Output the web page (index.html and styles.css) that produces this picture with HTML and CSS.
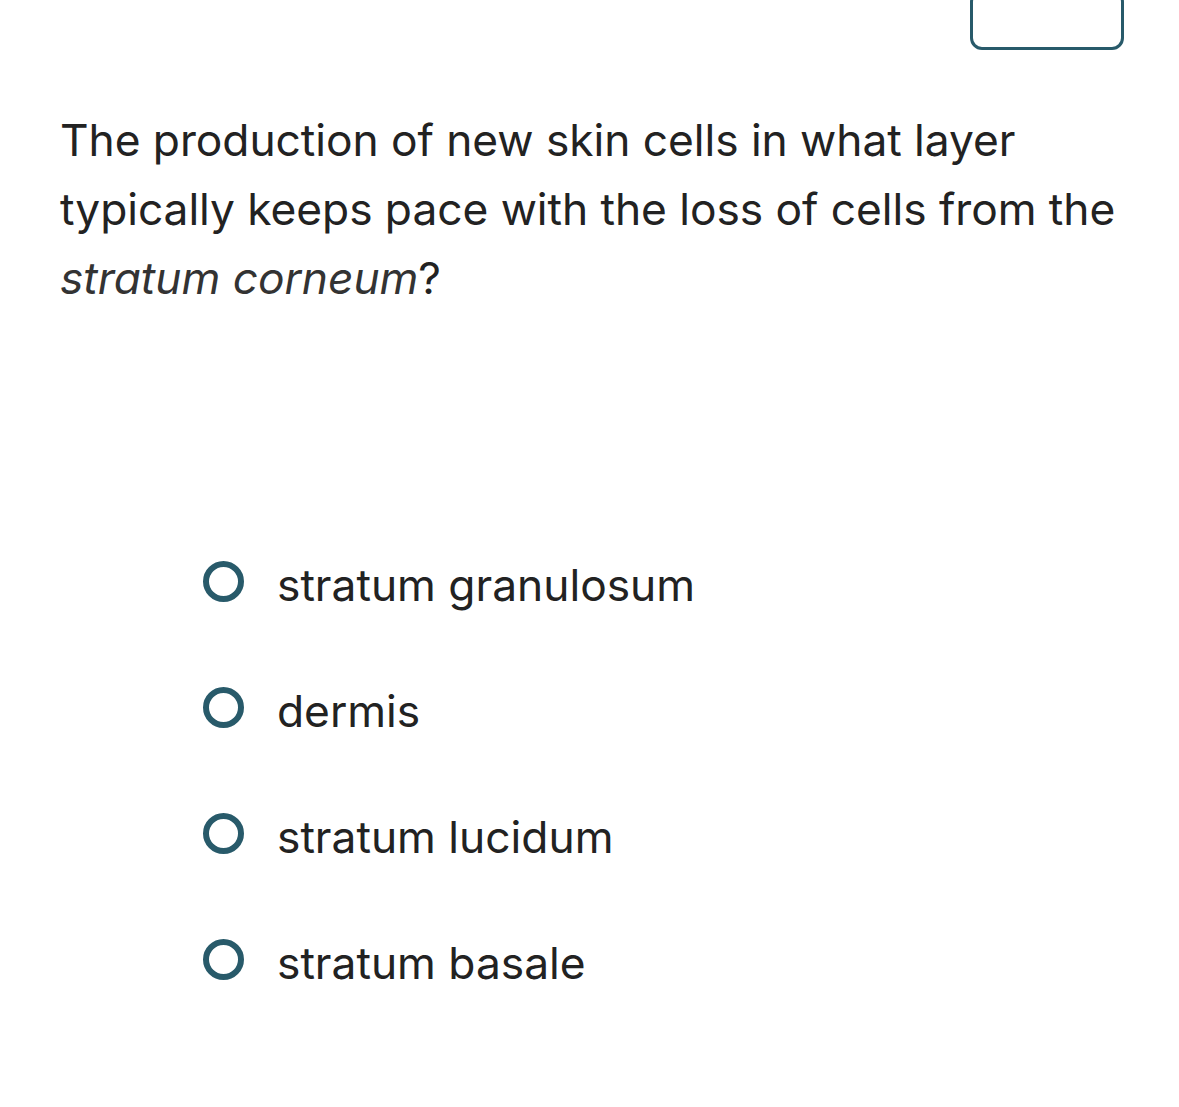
FILE: index.html
```html
<!DOCTYPE html>
<html>
<head>
<meta charset="utf-8">
<link rel="stylesheet" href="styles.css">
</head>
<body>
<div class="topbar"><div class="topbox"></div></div>
<div class="question">The production of new skin cells in what layer typically keeps pace with the loss of cells from the <em>stratum corneum</em>?</div>
<div class="options">
  <label class="option"><span class="radio"></span><span class="label">stratum granulosum</span></label>
  <label class="option"><span class="radio"></span><span class="label">dermis</span></label>
  <label class="option"><span class="radio"></span><span class="label">stratum lucidum</span></label>
  <label class="option"><span class="radio"></span><span class="label">stratum basale</span></label>
</div>
</body>
</html>
```
FILE: styles.css
```css
html, body { margin: 0; padding: 0; background: #fff; }
body { font-family: Inter, "Open Sans", sans-serif; color: #222; width: 1179px; height: 1107px; overflow: hidden; }
.topbar { display: flex; justify-content: flex-end; padding-right: 55px; }
.topbox { width: 148px; height: 54px; margin-top: -10px; border: 3.5px solid #285a6a; border-radius: 12px; }
.question { padding: 0 60px; margin-top: 56px; font-size: 44.3px; line-height: 69px; letter-spacing: -0.05px; }
.question em { font-style: italic; color: #333; }
.options { display: flex; flex-direction: column; padding-left: 203px; margin-top: 247px; gap: 84px; }
.option { display: flex; align-items: center; gap: 33px; height: 42px; }
.radio { width: 29px; height: 29px; border: 6.5px solid #285a6a; border-radius: 50%; flex: none; }
.label { font-size: 44.3px; line-height: 42px; padding-top: 8px; }
```
